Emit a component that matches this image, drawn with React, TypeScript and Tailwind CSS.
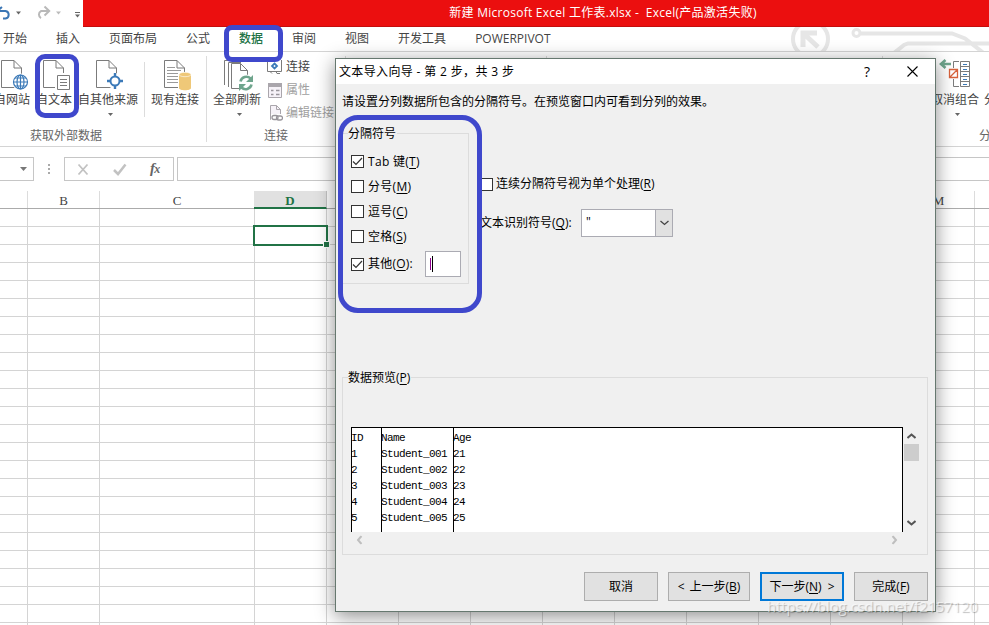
import React from "react";
import clsx from "clsx";

const TABS = ["开始", "插入", "页面布局", "公式", "数据", "审阅", "视图", "开发工具", "POWERPIVOT"];

const COLUMNS = ["", "B", "C", "D", "E", "F", "G", "H", "I", "J", "K", "L", "M", ""];
const GRID = "grid grid-cols-[28px_72px_155px_repeat(10,72px)_72px]";

const PREVIEW = [
  ["ID", "1", "2", "3", "4", "5"],
  ["Name", "Student_001", "Student_002", "Student_003", "Student_004", "Student_005"],
  ["Age", "21", "22", "23", "24", "25"],
];

function Caret({ className = "fill-[#666]" }: { className?: string }) {
  return (
    <svg width="5" height="3" viewBox="0 0 5 3" className={clsx("shrink-0", className)}>
      <path d="M0 0h5L2.5 3z" />
    </svg>
  );
}

function Page({ x }: { x: number }) {
  return (
    <g transform={`translate(${x} 2)`} fill="none" stroke="#7b7b7b">
      <path d="M.5.5H13L20.5 8V27.5H.5z" fill="#fff" />
      <path d="M13 .5V8h7.5" />
    </g>
  );
}

function TitleBar() {
  return (
    <header className="flex h-[27px]">
      <div className="flex w-[83px] shrink-0 items-center">
        <svg width="83" height="27" viewBox="0 0 83 27" fill="none">
          <path d="M-3 11H5.500a3.800 3.800 0 0 1 0 7.500H3M2 7l-5 4" stroke="#3b76b5" strokeWidth="2" />
          <path d="M16 11.500h5L18.500 14.500z" fill="#666" />
          <path d="M49 11H41a4 4 0 0 0 0 7M44.500 6.500L49.200 11l-4.700 4.500" stroke="#b9b9b9" strokeWidth="2" />
          <path d="M56 11.500h5L58.500 14.500z" fill="#bbb" />
          <path d="M75 12.500h5" stroke="#666" />
          <path d="M75 14.500h5L77.500 17.500z" fill="#666" />
        </svg>
      </div>
      <div className="flex flex-1 items-center justify-center border-b border-[#c40d0d] bg-[#eb0f0f] pl-[134px] tracking-[0.26px] whitespace-pre text-white">
        新建 Microsoft Excel 工作表.xlsx -  Excel(产品激活失败)
      </div>
    </header>
  );
}

function TabStrip() {
  return (
    <nav className="relative flex h-[25px] items-center gap-[29px] border-b border-[#d4d4d4] pl-[3px]">
      {TABS.map((tab) => (
        <span key={tab} className={clsx("relative z-10 leading-4", tab === "数据" ? "font-medium text-[#217346]" : "text-[#444]")}>
          {tab}
        </span>
      ))}
      <svg className="absolute top-0 right-0" width="209" height="24" viewBox="780 27 209 24" fill="none" stroke="#e6e6e6" strokeWidth="4">
        <circle cx="810.500" cy="39" r="17.500" />
        <path d="M803 47V33h14M804 34l14 13" strokeWidth="5" />
        <circle cx="856.500" cy="33" r="3.500" strokeWidth="3" />
        <path d="M861 33.500h91l13 5 18 14M894 53l10-8 4-1.500h81" />
      </svg>
    </nav>
  );
}

interface RibbonButtonProps {
  label: string;
  className: string;
  width: number;
  menu?: boolean;
  children: React.ReactNode;
}

function RibbonButton({ label, className, width, menu, children }: RibbonButtonProps) {
  return (
    <div className={clsx("flex shrink-0 flex-col items-center whitespace-nowrap pt-1.5", className)}>
      <svg width={width} height="34" viewBox={`0 0 ${width} 34`} fill="none">
        {children}
      </svg>
      <span className="mb-[5px] leading-4">{label}</span>
      {menu && <Caret className="ml-1 fill-[#666]" />}
    </div>
  );
}

function SmallCommand({ label, disabled, children }: { label: string; disabled?: boolean; children: React.ReactNode }) {
  return (
    <div className={clsx("flex h-[23px] items-center gap-[3px] whitespace-nowrap", disabled && "text-[#a0a0a0]")}>
      <svg width="16" height="16" viewBox="0 0 16 16" fill="none">
        {children}
      </svg>
      <span className="leading-4">{label}</span>
    </div>
  );
}

function Ribbon() {
  return (
    <div className="flex h-[95px] overflow-hidden border-b border-[#d4d4d4] text-[#444]">
      <div className="w-[206px] shrink-0">
        <div className="flex h-[76px]">
          <RibbonButton label="自网站" className="-ml-1.5 w-9" width={36}>
            <Page x={7} />
            <circle cx="26.500" cy="24" r="8.500" fill="#fff" />
            <g stroke="#3c7ab8" strokeWidth="1.200">
              <circle cx="26.500" cy="24" r="7" />
              <ellipse cx="26.500" cy="24" rx="3.500" ry="7" />
              <path d="M26.500 17v14M19.500 24h14M21 20h11M21 28h11" />
            </g>
          </RibbonButton>
          <RibbonButton label="自文本" className="ml-1.5 w-9" width={36}>
            <Page x={7} />
            <path d="M19 15h17v19H19z" fill="#fff" />
            <path d="M21.500 17.500h12v14h-12zM24 21.500h7M24 24.500h7M24 27.500h7" stroke="#7b7b7b" />
          </RibbonButton>
          <RibbonButton label="自其他来源" className="ml-1.5 w-[60px]" width={60} menu>
            <Page x={18} />
            <circle cx="37" cy="23" r="8" fill="#fff" />
            <circle cx="37" cy="23" r="4.500" stroke="#3c7ab8" strokeWidth="2" />
            <path d="M37 15v4M37 27v4M29 23h4M41 23h4" stroke="#3c7ab8" strokeWidth="2.400" />
          </RibbonButton>
          <div className="mt-2.5 ml-1.5 h-[55px] w-px bg-[#dcdcdc]" />
          <RibbonButton label="现有连接" className="ml-1.5 w-12" width={48}>
            <Page x={13} />
            <path d="M16 9.500h8M16 12.500h14M16 15.500h12M16 18.500h12M16 21.500h12M16 24.500h12" stroke="#9a9a9a" />
            <path d="M27 14h15v20H27z" fill="#fff" />
            <path d="M28 17v13c0 3 12 3 12 0V17z" fill="#efc878" />
            <ellipse cx="34" cy="16.500" rx="6" ry="2.200" fill="#efc878" stroke="#fff" strokeWidth=".6" />
          </RibbonButton>
        </div>
        <div className="pl-[30px] leading-4 text-[#666]">获取外部数据</div>
      </div>
      <div className="my-1 w-px shrink-0 bg-[#dcdcdc]" />
      <div className="w-[138px] shrink-0">
        <div className="flex h-[76px]">
          <RibbonButton label="全部刷新" className="ml-1.5 w-12" width={48} menu>
            <path d="M11.500 27V2.500H24M15.500 29V4.500H28" stroke="#7b7b7b" />
            <path d="M18.500 30.500v-25h9l7 7v18z" fill="#fff" stroke="#7b7b7b" />
            <path d="M27.500 5.500v7h7" stroke="#7b7b7b" />
            <circle cx="33" cy="25" r="8.500" fill="#fff" />
            <path d="M27.500 23.500a6 6 0 0 1 10-3M38.500 26.500a6 6 0 0 1-10 3" stroke="#6fa58d" strokeWidth="2.600" />
            <path d="M40 17v7h-7zM26 33v-7h7z" fill="#6fa58d" />
          </RibbonButton>
          <div className="ml-1.5 flex flex-col pt-[3px]">
            <SmallCommand label="连接">
              <path d="M.5 1v11.500H14.500V1M3 12.500l2 2M13 14.500h-3l-1-2" stroke="#7b7b7b" />
              <path d="M7.500 4.500L10 7 7.500 9.500 5 7z" stroke="#3c7ab8" strokeWidth="1.800" />
            </SmallCommand>
            <SmallCommand label="属性" disabled>
              <path d="M1.500 1.500h13v14h-13z" fill="#f6f2f8" stroke="#aaa6ac" />
              <path d="M1 1h14v4H1z" fill="#aaa6ac" />
              <path d="M4 8.500h2.500M9 8.500h3.500M4 12.500h2.500M9 12.500h3.500" stroke="#99959b" strokeWidth="1.500" />
            </SmallCommand>
            <SmallCommand label="编辑链接" disabled>
              <path d="M3.500.5h6l4 4v10h-10z" fill="#f6f2f8" stroke="#aaa6ac" />
              <path d="M9.500.5v4h4" stroke="#aaa6ac" />
              <path d="M4 9h12v7H4z" fill="#fff" />
              <rect x="5" y="10.500" width="6" height="4" rx="2" stroke="#99959b" strokeWidth="1.300" />
              <rect x="9.500" y="11" width="6" height="4" rx="2" stroke="#99959b" strokeWidth="1.300" />
            </SmallCommand>
          </div>
        </div>
        <div className="pl-[57px] leading-4 text-[#666]">连接</div>
      </div>
      <div className="my-1 w-px shrink-0 bg-[#dcdcdc]" />
      <div className="w-[200px] shrink-0" />
      <div className="my-1 w-px shrink-0 bg-[#dcdcdc]" />
      <div className="w-[335px] shrink-0" />
      <div className="my-1 w-px shrink-0 bg-[#dcdcdc]" />
      <div className="w-[160px] shrink-0">
        <div className="flex h-[76px]">
          <RibbonButton label="取消组合" className="ml-12 w-12" width={48} menu>
            <path d="M20 6H11M14.500 2L10 6l4.500 4" stroke="#6fa58d" strokeWidth="2.600" />
            <path d="M28 3.500h-5.500V10M22.500 21v7.500H28" stroke="#7b7b7b" />
            <path d="M29.500 3.500h9v25h-9zM29 8.500h10M29 13.500h10M29 18.500h10M29 23.500h10" stroke="#7b7b7b" />
            <path d="M32 6.500h4M32 11.500h4M32 16.500h4M32 21.500h4M32 26.500h4" stroke="#3c7ab8" strokeWidth="1.200" />
            <path d="M18.500 11.500h8v8h-8zM19 19l7-7" stroke="#d8633c" strokeWidth="1.300" />
          </RibbonButton>
          <RibbonButton label="分类汇总" className="ml-[5px] w-12" width={48}>
            {null}
          </RibbonButton>
        </div>
        <div className="pl-24 leading-4 text-[#666]">分级显示</div>
      </div>
    </div>
  );
}

function FormulaBar() {
  return (
    <div className="flex h-11 items-start pt-2.5">
      <div className="flex h-6 w-[34px] items-center justify-end border border-l-0 border-[#c6c6c6] pr-[6px]">
        <svg width="7" height="4" className="fill-[#777]">
          <path d="M0 0h7L3.500 4z" />
        </svg>
      </div>
      <div className="flex h-6 w-[30px] flex-col items-center justify-center gap-[2px]">
        <i className="size-[2px] bg-[#aaa]" />
        <i className="size-[2px] bg-[#aaa]" />
        <i className="size-[2px] bg-[#aaa]" />
      </div>
      <div className="flex h-6 w-[110px] items-center border border-[#c6c6c6]">
        <svg width="108" height="22" viewBox="0 0 108 22" fill="none" stroke="#c2c2c2">
          <path d="M13.500 6.500l9 10M22.500 6.500l-9 10" strokeWidth="1.800" />
          <path d="M49 12l4 4 7.500-9.500" strokeWidth="2.500" />
        </svg>
        <span className="-ml-[23px] pb-px font-[Liberation_Serif] text-[15px] leading-4 font-bold tracking-tighter text-[#666] italic">
          f<span className="text-[12px]">x</span>
        </span>
      </div>
      <div className="ml-[3px] h-6 flex-1 border border-r-0 border-[#c6c6c6]" />
    </div>
  );
}

function Sheet() {
  return (
    <div className="relative">
      <div className={clsx(GRID, "h-[18px] border-b border-[#ababab]")}>
        {COLUMNS.map((name, i) => (
          <div
            key={i}
            className={clsx(
              "flex h-[17px] items-center justify-center border-r pt-[3px] font-[Liberation_Serif] text-[13px]",
              name === "D"
                ? "-ml-px h-[18px] border-b-2 border-r-[#c6c6c6] border-b-[#217346] bg-[#e1e1e1] font-bold text-[#217346]"
                : "border-[#dcdcdc] text-[#444]"
            )}
          >
            {name}
          </div>
        ))}
      </div>
      {Array.from({ length: 24 }, (_, row) => (
        <div key={row} className={GRID}>
          {COLUMNS.map((_, i) => (
            <div key={i} className="h-[18px] border-r border-b border-[#d4d4d4]" />
          ))}
        </div>
      ))}
      <div className="absolute top-[34px] left-[253px] h-[21px] w-[75px] border-2 border-[#217346]">
        <div className="absolute -right-[4px] -bottom-[4px] size-[7px] border border-white bg-[#217346]" />
      </div>
    </div>
  );
}

function Checkbox({ checked }: { checked?: boolean }) {
  return (
    <span className="size-[13px] shrink-0 border border-[#333] bg-white">
      {checked && (
        <svg width="11" height="11" viewBox="0 0 11 11" fill="none" stroke="#333" strokeWidth="1.200">
          <path d="M1 5.500l3 3 6-6.500" />
        </svg>
      )}
    </span>
  );
}

/** Label followed by its underlined access key, e.g. 分号(M) */
function Mnemonic({ text, k, after = "" }: { text: string; k: string; after?: string }) {
  return (
    <span className="leading-4 whitespace-pre">
      {text}(<u className="underline-offset-2">{k}</u>){after}
    </span>
  );
}

function Chevron({ className }: { className: string }) {
  return (
    <svg width="9" height="6" viewBox="0 0 9 6" fill="none" strokeWidth="2" className={className}>
      <path d="M.5 1l4 3.500L8.500 1" />
    </svg>
  );
}

function DialogButton({ primary, className, children }: { primary?: boolean; className: string; children: React.ReactNode }) {
  return (
    <button
      className={clsx(
        "flex h-[29px] items-center justify-center bg-[#e1e1e1] pt-px whitespace-pre",
        primary ? "border-2 border-[#0078d7]" : "border border-[#adadad]",
        className
      )}
    >
      {children}
    </button>
  );
}

function ImportWizard() {
  return (
    <section className="absolute top-[58px] left-[335px] flex h-[554px] w-[601px] flex-col border border-[#66786f] bg-[#f0f0f0] text-black shadow-[0_4px_18px_rgba(0,0,0,0.45)]">
      <div className="flex h-[25px] shrink-0 items-center bg-white pl-[3px]">
        <span className="flex-1 tracking-[0.35px]">文本导入向导 - 第 2 步，共 3 步</span>
        <span className="mr-[37px] text-[14px] font-medium">?</span>
        <svg width="11" height="11" viewBox="0 0 11 11" className="mr-[17px]" stroke="#000" strokeWidth="1.100">
          <path d="M.5.5l10 10M10.500.5l-10 10" />
        </svg>
      </div>
      <p className="mt-2.5 pl-1.5 leading-4">请设置分列数据所包含的分隔符号。在预览窗口内可看到分列的效果。</p>

      <div className="mt-[23px] flex pl-1.5">
        <div className="h-[151px] w-[127px] border border-[#dcdcdc] pl-2">
          <div className="-mt-2 mb-[7px] -ml-[3px] w-fit bg-[#f0f0f0] pr-px leading-4">分隔符号</div>
          <label className="flex h-[25px] items-center gap-1 tracking-[0.3px]"><Checkbox checked /><Mnemonic text="Tab 键" k="T" /></label>
          <label className="flex h-[25px] items-center gap-1 tracking-[0.3px]"><Checkbox /><Mnemonic text="分号" k="M" /></label>
          <label className="flex h-[25px] items-center gap-1 tracking-[0.2px]"><Checkbox /><Mnemonic text="逗号" k="C" /></label>
          <label className="flex h-[25px] items-center gap-1 tracking-[0.2px]"><Checkbox /><Mnemonic text="空格" k="S" /></label>
          <label className="mt-[2px] flex h-[26px] items-center gap-1 pr-[7px] tracking-[0.2px]">
            <Checkbox checked />
            <Mnemonic text="其他" k="O" after=":" />
            <span className="ml-auto flex h-[26px] w-9 items-center border border-[#ababb3] bg-white pl-1">
              <i className="h-3 w-px bg-[#900090]" />
              <i className="ml-px h-4 w-px bg-black" />
            </span>
          </label>
        </div>
        <div className="ml-[11px] pt-[43px]">
          <label className="flex h-4 items-center gap-[3px]"><Checkbox /><Mnemonic text="连续分隔符号视为单个处理" k="R" /></label>
          <div className="mt-[17px] flex items-center">
            <div className="w-[101px]"><Mnemonic text="文本识别符号" k="Q" after=":" /></div>
            <div className="flex h-7 w-[92px] border border-[#ababb3] bg-white">
              <span className="flex-1 pt-1 pl-1 leading-4">"</span>
              <span className="flex w-[17px] items-center justify-center border-l border-[#ababb3] bg-[#e1e1e1]">
                <Chevron className="stroke-[#444] stroke-[1.3]" />
              </span>
            </div>
          </div>
        </div>
      </div>

      <div className="mt-[93px] ml-1.5 h-[178px] w-[586px] shrink-0 border border-[#dcdcdc] pl-2">
        <div className="-mt-2 mb-[41px] -ml-[3px] w-fit bg-[#f0f0f0] pr-px"><Mnemonic text="数据预览" k="P" /></div>
        <div className="flex">
          <div className="flex h-[105px] w-[552px] border-t border-r border-black bg-white font-[Liberation_Mono] text-[11px] tracking-[-0.6px]">
            {PREVIEW.map((column, i) => (
              <div key={i} className={clsx("border-l border-black pt-[2px]", i === 0 && "w-[30px]", i === 1 && "w-[72px]", i === 2 && "flex-1")}>
                {column.map((value) => (
                  <div key={value} className="-ml-px h-4 leading-4">{value}</div>
                ))}
              </div>
            ))}
          </div>
          <div className="ml-px flex w-[15px] flex-col items-center pt-1.5">
            <Chevron className="rotate-180 stroke-[#555]" />
            <div className="mt-[5px] mb-auto h-[17px] w-full bg-[#cdcdcd]" />
            <Chevron className="mb-1.5 stroke-[#555]" />
          </div>
        </div>
        <div className="flex h-[15px] w-[552px] items-center justify-between px-1">
          <Chevron className="rotate-90 stroke-[#bfbfbf]" />
          <Chevron className="-rotate-90 stroke-[#bfbfbf]" />
        </div>
      </div>

      <div className="mt-[17px] flex justify-end gap-2.5 pr-[7px]">
        <DialogButton className="w-[74px]">取消</DialogButton>
        <DialogButton className="w-[82px]">&lt;<span className="w-[5px]" /><Mnemonic text="上一步" k="B" /></DialogButton>
        <DialogButton className="w-[84px]" primary><Mnemonic text="下一步" k="N" /><span className="w-[6px]" />&gt;</DialogButton>
        <DialogButton className="w-[74px]"><Mnemonic text="完成" k="F" /></DialogButton>
      </div>
    </section>
  );
}

export default function App() {
  return (
    <main className="relative h-[625px] w-[989px] overflow-hidden bg-white font-['Open_Sans','Noto_Sans_CJK_SC',sans-serif] text-[12px] leading-4">
      <TitleBar />
      <TabStrip />
      <Ribbon />
      <FormulaBar />
      <Sheet />
      <ImportWizard />

      {/* hand-drawn highlights */}
      <div className="absolute top-[25px] left-[224px] z-20 h-[37px] w-[59px] rounded-lg border-[5px] border-[#3f48cc]" />
      <div className="absolute top-[54px] left-[35px] h-[64px] w-[44px] rounded-[10px] border-[5px] border-[#3f48cc]" />
      <div className="absolute top-[115px] left-[338px] h-[198px] w-[144px] rounded-[20px] border-[5px] border-[#3f48cc]" />

      <div className="absolute top-[596px] left-[767px] text-[14.7px] leading-5 whitespace-nowrap text-white/60 [text-shadow:1px_1px_1px_rgba(0,0,0,0.25)]">
        https://blog.csdn.net/f2157120
      </div>
    </main>
  );
}
